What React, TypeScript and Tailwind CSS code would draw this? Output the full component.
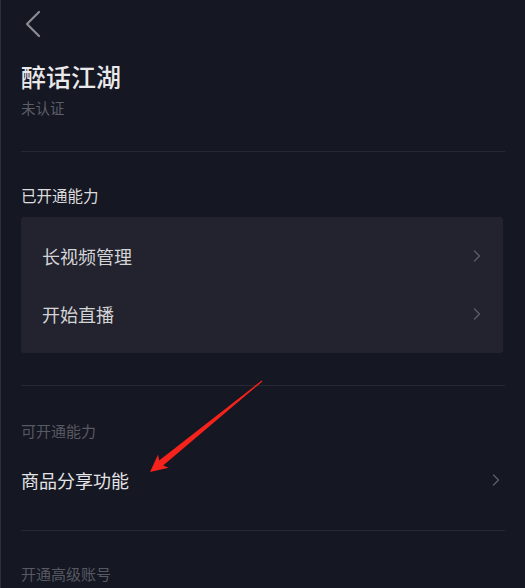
import React from "react";

function Chevron({ className }: { className?: string }) {
  return (
    <svg width="8" height="12" viewBox="0 0 8 12" className={className} fill="none">
      <path d="M1.5 1 L6.5 6 L1.5 11" stroke="#5a5c66" strokeWidth="1.4" strokeLinecap="round" strokeLinejoin="round" />
    </svg>
  );
}

export default function App() {
  return (
    <div className="relative w-full h-[588px] overflow-hidden bg-[#151722] border-l border-[#2c2e38] font-['Noto_Sans_CJK_SC',sans-serif]">
      <div className="pl-[20px] pr-[20px]">
        <div className="h-[48px] flex items-center">
          <svg width="22" height="48" viewBox="0 0 22 48" fill="none">
            <path d="M18 12 L6 24 L18 36" stroke="#8b8c92" strokeWidth="2.2" strokeLinecap="round" strokeLinejoin="round" />
          </svg>
        </div>
        <div className="mt-[12px] text-[25px] leading-[32px] font-medium text-[#e9e9eb]">醉话江湖</div>
        <div className="mt-[6px] text-[14.5px] leading-[20px] text-[#5c5e67]">未认证</div>
        <div className="mt-[33px] h-px bg-[#262834]" />
        <div className="mt-[32px] text-[15.5px] leading-[22px] text-[#dcdcde]">已开通能力</div>
        <div className="mt-[11px] mr-[2px] rounded-[3px] bg-[#22232e] py-[10px]">
          <div className="h-[58px] flex items-center justify-between pl-[21px] pr-[22px]">
            <span className="text-[18px] leading-[24px] text-[#d4d4d7]">长视频管理</span>
            <Chevron />
          </div>
          <div className="h-[58px] flex items-center justify-between pl-[21px] pr-[22px]">
            <span className="text-[18px] leading-[24px] text-[#d4d4d7]">开始直播</span>
            <Chevron />
          </div>
        </div>
        <div className="mt-[32px] h-px bg-[#262834]" />
        <div className="mt-[35px] text-[15px] leading-[20px] text-[#575963]">可开通能力</div>
        <div className="mt-[10px] h-[58px] flex items-center justify-between pr-[5px]">
          <span className="text-[18px] leading-[24px] text-[#e4e4e6]">商品分享功能</span>
          <Chevron />
        </div>
        <div className="mt-[21px] h-px bg-[#262834]" />
        <div className="mt-[33px] text-[15px] leading-[20px] text-[#575963]">开通高级账号</div>
      </div>
      <svg className="absolute inset-0 pointer-events-none" width="525" height="588" viewBox="0 0 525 588">
        <polygon
          transform="translate(261 381) rotate(140.9)"
          points="0,-0.6 130,-3.2 127,-8.5 144.3,0 127,8.5 130,3.2 0,0.6"
          fill="#f5231b"
        />
      </svg>
    </div>
  );
}
